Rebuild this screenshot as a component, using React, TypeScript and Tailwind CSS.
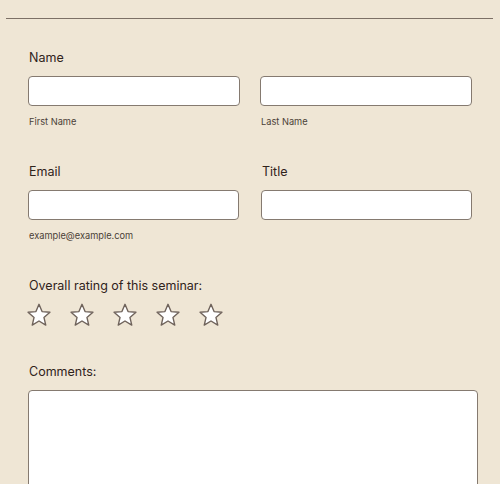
import { useState } from 'react';

function StarIcon() {
    return (
        <svg width="24" height="24" viewBox="0 0 24 24">
            <polygon
                points="12,1.3 15.06,8.59 22.94,9.25 16.95,14.41 18.76,22.1 12,18 5.24,22.1 7.05,14.41 1.06,9.25 8.94,8.59"
                fill="#ffffff"
                stroke="#6f635b"
                strokeWidth="1.4"
                strokeLinejoin="round"
            />
        </svg>
    );
}

const inputClass = 'h-[30px] w-full rounded-[4px] border border-[#857a70] bg-white px-2 text-sm outline-none';
const labelClass = 'pl-px text-[12.5px] leading-5 text-[#2f231b]';
const hintClass = 'mt-[9px] pl-px text-[9.25px] leading-[14px] text-[#4a3e36]';

function App() {
    const [rating, setRating] = useState(0);

    return (
        <div className="min-h-screen bg-[#efe6d5] font-['Inter',sans-serif] text-[#3b2d24]">
            <div className="pt-[18px]">
                <div className="mx-[6px] w-[487px] border-t border-[#7c7066]" />
            </div>

            <div className="px-[28px] pt-[29px]">
                <div className={labelClass}>Name</div>
                <div className="mt-[8px] flex gap-[20px]">
                    <div className="w-[212px]">
                        <input className={inputClass} />
                        <div className={hintClass}>First Name</div>
                    </div>
                    <div className="w-[212px]">
                        <input className={inputClass} />
                        <div className={hintClass}>Last Name</div>
                    </div>
                </div>

                <div className="mt-[33px] flex gap-[22px]">
                    <div className="w-[211px]">
                        <div className={labelClass}>Email</div>
                        <input className={`mt-[8px] ${inputClass}`} />
                        <div className={hintClass}>example@example.com</div>
                    </div>
                    <div className="w-[211px]">
                        <div className={labelClass}>Title</div>
                        <input className={`mt-[8px] ${inputClass}`} />
                    </div>
                </div>

                <div className={`mt-[33px] ${labelClass}`}>Overall rating of this seminar:</div>
                <div className="-ml-px mt-[7px] flex gap-[19px]">
                    {[1, 2, 3, 4, 5].map((n) => (
                        <button key={n} type="button" onClick={() => setRating(n)} aria-pressed={rating >= n}>
                            <StarIcon />
                        </button>
                    ))}
                </div>

                <div className={`mt-[35px] ${labelClass}`}>Comments:</div>
                <textarea className="mt-[8px] block h-[140px] w-[450px] resize-none rounded-[4px] border border-[#857a70] bg-white outline-none" />
            </div>
        </div>
    );
}

export default App;
